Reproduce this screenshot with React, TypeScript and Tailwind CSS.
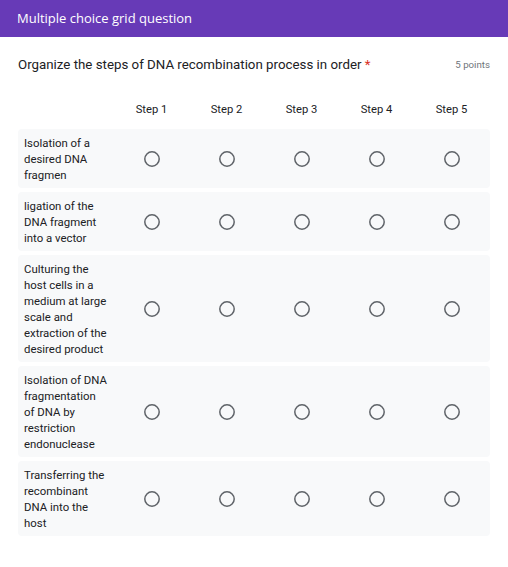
const steps = ["Step 1", "Step 2", "Step 3", "Step 4", "Step 5"];

const rows = [
  "Isolation of a desired DNA fragmen",
  "ligation of the DNA fragment into a vector",
  "Culturing the host cells in a medium at large scale and extraction of the desired product",
  "Isolation of DNA fragmentation of DNA by restriction endonuclease",
  "Transferring the recombinant DNA into the host",
];

function Radio() {
  return (
    <svg width="16" height="16" viewBox="0 0 16 16" className="block">
      <circle cx="8" cy="8" r="7.2" fill="none" stroke="#5f6368" strokeWidth="1.5" />
    </svg>
  );
}

export default function App() {
  return (
    <div className="w-[508px] h-[567px] bg-white font-['Roboto',sans-serif] text-[#202124]">
      <div className="h-[37px] bg-[#673ab7] flex items-center px-[17px]">
        <span className="text-white text-[13px] font-['Open_Sans',sans-serif]">
          Multiple choice grid question
        </span>
      </div>

      <div className="px-[18px]">
        <div className="flex items-center justify-between h-[20px] mt-[18px]">
          <span className="text-[13.3px] leading-[20px]">
            Organize the steps of DNA recombination process in order{" "}
            <span className="text-[#d93025]">*</span>
          </span>
          <span className="text-[9.7px] text-[#70757a]">5 points</span>
        </div>

        <div className="grid grid-cols-[96px_repeat(5,75px)] mt-[24px] h-[22px] items-center">
          <div />
          {steps.map((s) => (
            <div key={s} className="text-center text-[11.2px]">
              {s}
            </div>
          ))}
        </div>

        <div className="mt-[8px] flex flex-col gap-[4px]">
          {rows.map((label) => (
            <div
              key={label}
              className="grid grid-cols-[96px_repeat(5,75px)] items-center bg-[#f8f9fa] rounded-[4px] pt-[6px] pb-[5px]"
            >
              <div className="pl-[6px] pr-[6px] text-[11.4px] leading-[16px]">
                {label}
              </div>
              {steps.map((s) => (
                <div key={s} className="flex justify-center">
                  <Radio />
                </div>
              ))}
            </div>
          ))}
        </div>
      </div>
    </div>
  );
}
